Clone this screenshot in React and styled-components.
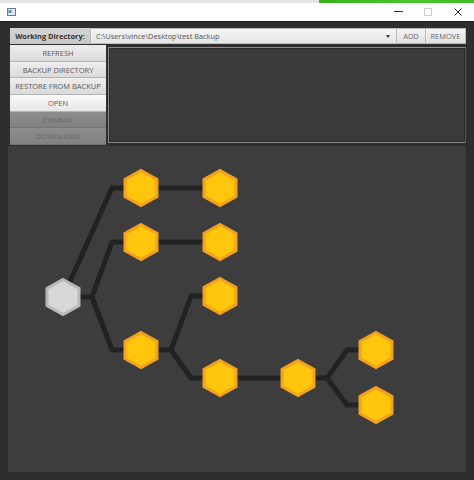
import React from "react";
import styled, { createGlobalStyle } from "styled-components";

const GlobalStyle = createGlobalStyle`
  html, body {
    margin: 0;
    padding: 0;
    width: 474px;
    height: 480px;
    overflow: hidden;
    background: #2d2d2d;
  }
  #root { width: 474px; height: 480px; }
`;

const Window = styled.div`
  width: 474px;
  height: 480px;
  display: flex;
  flex-direction: column;
  font-family: "Open Sans", "Noto Sans", sans-serif;
`;

const TopStrip = styled.div`
  height: 3px;
  display: flex;
  justify-content: flex-end;
  background: #e4e4e4;
`;

const GreenBar = styled.div`
  width: 155px;
  background: linear-gradient(90deg, #37b21c, #4cc531 60%, #3fbb25);
`;

const TitleBar = styled.div`
  height: 18px;
  background: #ffffff;
  border-bottom: 1px solid #1e1e1e;
  display: flex;
  align-items: center;
  padding-left: 7px;
  padding-right: 1px;
`;

const Spacer = styled.div`
  flex: 1;
`;

const Caption = styled.div`
  width: 30px;
  height: 18px;
  display: flex;
  align-items: center;
  justify-content: center;
`;

const Content = styled.div`
  flex: 1;
  background: #2e2e2e;
  padding: 6px 8px 8px 9px;
  display: flex;
  flex-direction: column;
  min-height: 0;
`;

const Toolbar = styled.div`
  height: 16px;
  margin-left: 1px;
  display: flex;
`;

const Label = styled.div`
  width: 80px;
  display: flex;
  align-items: center;
  justify-content: center;
  background: linear-gradient(#d4d4d4, #c6c6c6);
  color: #333333;
  font-size: 7.4px;
  font-weight: 700;
  white-space: nowrap;
`;

const Combo = styled.div`
  flex: 1;
  display: flex;
  align-items: center;
  padding: 0 6px 0 5px;
  background: linear-gradient(#f4f4f4, #e4e4e4);
  border: 1px solid #bdbdbd;
  color: #555555;
  font-size: 7.4px;
  white-space: nowrap;
`;

const Arrow = styled.span`
  width: 0;
  height: 0;
  border-left: 2.5px solid transparent;
  border-right: 2.5px solid transparent;
  border-top: 3px solid #3a3a3a;
`;

const BarButton = styled.div`
  width: ${(p) => p.$w}px;
  display: flex;
  align-items: center;
  justify-content: center;
  background: linear-gradient(#f3f3f3, #e1e1e1);
  border: 1px solid #b8b8b8;
  border-left: none;
  color: #6a6a6a;
  font-size: 7.5px;
  white-space: nowrap;
`;

const MiddleRow = styled.div`
  height: 100px;
  margin-top: 1px;
  margin-left: 1px;
  display: flex;
  gap: 2px;
`;

const ButtonColumn = styled.div`
  width: 96px;
  display: flex;
  flex-direction: column;
`;

const SideButton = styled.div`
  flex: 1;
  display: flex;
  align-items: center;
  justify-content: center;
  font-size: 7.5px;
  white-space: nowrap;
  border-bottom: 1px solid ${(p) => (p.$disabled ? "#747474" : "#b4b4b4")};
  background: ${(p) =>
    p.$disabled
      ? "linear-gradient(#8d8d8d, #828282)"
      : p.$focused
      ? "linear-gradient(#fafafa, #e6e6e6)"
      : "linear-gradient(#eeeeee, #dadada)"};
  color: ${(p) => (p.$disabled ? "#666666" : "#5c5c5c")};
`;

const TextArea = styled.div`
  flex: 1;
  margin: 2px 0 2px 0;
  background: #3b3b3b;
  border: 1px solid #8a8a8a;
  border-right-color: #555;
  box-shadow: inset 0 0 0 1px #2b2b2b;
`;

const Canvas = styled.div`
  flex: 1;
  margin-top: 1px;
  margin-left: -1px;
  background: #3d3d3d;
  min-height: 0;
  display: flex;
`;

const Graph = styled.svg`
  width: 100%;
  height: 100%;
  display: block;
`;

const hexPoints = (cx, cy) =>
  [
    [cx, cy - 17.5],
    [cx + 16, cy - 8.5],
    [cx + 16, cy + 8.5],
    [cx, cy + 17.5],
    [cx - 16, cy + 8.5],
    [cx - 16, cy - 8.5],
  ]
    .map((p) => p.join(","))
    .join(" ");

const nodes = [
  { x: 64, y: 297, root: true },
  { x: 142, y: 188 },
  { x: 221, y: 188 },
  { x: 142, y: 242 },
  { x: 221, y: 242 },
  { x: 221, y: 296 },
  { x: 142, y: 350 },
  { x: 221, y: 378 },
  { x: 299, y: 378 },
  { x: 377, y: 350 },
  { x: 377, y: 405 },
];

const edges = [
  "M64 297 L113 188 L221 188",
  "M64 297 L93 297 L113 242 L221 242",
  "M93 297 L113 350 L172 350 L192 296 L221 296",
  "M172 350 L192 378 L328 378 L348 350 L377 350",
  "M328 378 L348 405 L377 405",
];

function WindowIcon() {
  return (
    <svg width="9" height="8" viewBox="0 0 9 8">
      <rect x="0.5" y="0.5" width="8" height="7" fill="#dfe7ee" stroke="#6d7a86" />
      <rect x="1.5" y="2" width="3" height="3" fill="#5c8fc2" />
    </svg>
  );
}

export default function App() {
  const buttons = [
    { label: "REFRESH" },
    { label: "BACKUP DIRECTORY" },
    { label: "RESTORE FROM BACKUP" },
    { label: "OPEN", focused: true },
    { label: "COMMIT", disabled: true },
    { label: "DOWNLOAD", disabled: true },
  ];
  return (
    <>
      <GlobalStyle />
      <Window>
        <TopStrip>
          <GreenBar />
        </TopStrip>
        <TitleBar>
          <WindowIcon />
          <Spacer />
          <Caption>
            <svg width="9" height="2" viewBox="0 0 9 2">
              <rect width="9" height="1" fill="#333" />
            </svg>
          </Caption>
          <Caption>
            <svg width="8" height="8" viewBox="0 0 8 8">
              <rect x="0.5" y="0.5" width="7" height="7" fill="none" stroke="#cfcfcf" />
            </svg>
          </Caption>
          <Caption>
            <svg width="8" height="8" viewBox="0 0 8 8">
              <path d="M0.5 0.5 L7.5 7.5 M7.5 0.5 L0.5 7.5" stroke="#333" strokeWidth="1" />
            </svg>
          </Caption>
        </TitleBar>
        <Content>
          <Toolbar>
            <Label>Working Directory:</Label>
            <Combo>
              <span>C:\Users\vince\Desktop\test Backup</span>
              <Spacer />
              <Arrow />
            </Combo>
            <BarButton $w={28}>ADD</BarButton>
            <BarButton $w={39}>REMOVE</BarButton>
          </Toolbar>
          <MiddleRow>
            <ButtonColumn>
              {buttons.map((b) => (
                <SideButton key={b.label} $disabled={b.disabled} $focused={b.focused}>
                  {b.label}
                </SideButton>
              ))}
            </ButtonColumn>
            <TextArea />
          </MiddleRow>
          <Canvas>
            <Graph viewBox="9 146 457 326" preserveAspectRatio="xMinYMin meet">
              {edges.map((d, i) => (
                <path key={i} d={d} fill="none" stroke="#222222" strokeWidth="5" strokeLinejoin="miter" />
              ))}
              {nodes.map((n, i) => (
                <polygon
                  key={i}
                  points={hexPoints(n.x, n.y)}
                  fill={n.root ? "#d8d8d8" : "#ffc60b"}
                  stroke={n.root ? "#b9b9b9" : "#f4a11f"}
                  strokeWidth="3"
                  strokeLinejoin="miter"
                />
              ))}
            </Graph>
          </Canvas>
        </Content>
      </Window>
    </>
  );
}
